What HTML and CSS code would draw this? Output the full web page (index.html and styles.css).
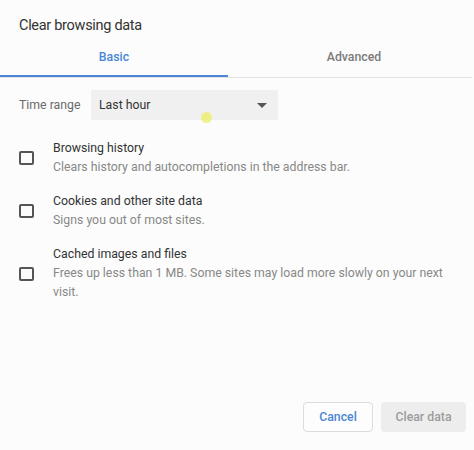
FILE: index.html
```html
<!DOCTYPE html>
<html>
<head>
<meta charset="utf-8">
<link rel="stylesheet" href="styles.css">
</head>
<body>
<div class="dialog">
  <div class="title">Clear browsing data</div>
  <div class="tabs">
    <div class="tab active">Basic</div>
    <div class="tab">Advanced</div>
  </div>
  <div class="range">
    <span class="range-label">Time range</span>
    <div class="select">
      <span>Last hour</span>
      <svg class="arrow" width="10" height="5" viewBox="0 0 10 5"><path d="M0 0 L10 0 L5 5 Z" fill="#555"/></svg>
    </div>
  </div>
  <div class="options">
    <div class="option">
      <span class="box"></span>
      <div class="text">
        <div class="label">Browsing history</div>
        <div class="desc">Clears history and autocompletions in the address bar.</div>
      </div>
    </div>
    <div class="option">
      <span class="box"></span>
      <div class="text">
        <div class="label">Cookies and other site data</div>
        <div class="desc">Signs you out of most sites.</div>
      </div>
    </div>
    <div class="option">
      <span class="box"></span>
      <div class="text">
        <div class="label">Cached images and files</div>
        <div class="desc">Frees up less than 1 MB. Some sites may load more slowly on your next visit.</div>
      </div>
    </div>
  </div>
  <div class="actions">
    <button class="btn cancel">Cancel</button>
    <button class="btn clear">Clear data</button>
  </div>
  <span class="cursor"></span>
</div>
</body>
</html>
```

FILE: styles.css
```css
html, body {
  margin: 0;
  padding: 0;
  background: #fbfcfb;
}
.dialog {
  position: relative;
  width: 474px;
  height: 450px;
  display: flex;
  flex-direction: column;
  font-family: Roboto, "Liberation Sans", sans-serif;
  color: #333;
  box-sizing: border-box;
}
.title {
  padding: 16px 0 0 19px;
  font-size: 14.5px;
  letter-spacing: -0.3px;
  line-height: 20px;
  color: #333;
}
.tabs {
  display: flex;
  margin-top: 3px;
  width: 472px;
  border-bottom: 1px solid #e4e4e4;
}
.tab {
  box-sizing: border-box;
  height: 38px;
  padding-top: 8px;
  font-size: 12.3px;
  line-height: 20px;
  font-weight: 500;
  color: #7a7a7a;
  text-align: center;
}
.tab:first-child {
  width: 228px;
}
.tab:last-child {
  flex: 1;
  padding-left: 8px;
}
.tab.active {
  color: #4a86d6;
  border-bottom: 2px solid #4a86d6;
  margin-bottom: -1px;
}
.range {
  display: flex;
  align-items: center;
  margin-top: 12px;
  padding-left: 19px;
}
.range-label {
  width: 72px;
  font-size: 12.3px;
  color: #6a6a6a;
}
.select {
  box-sizing: border-box;
  width: 187px;
  height: 30px;
  background: #f0f0f0;
  display: flex;
  align-items: center;
  justify-content: space-between;
  padding: 0 8px 0 8px;
  font-size: 12.3px;
  color: #333;
}
.arrow {
  margin-right: 3px;
}
.options {
  display: flex;
  flex-direction: column;
  gap: 15px;
  margin-top: 19px;
}
.option {
  display: flex;
  align-items: center;
}
.box {
  box-sizing: border-box;
  width: 15px;
  height: 14px;
  border: 2px solid #555;
  border-radius: 2px;
  margin: 0 19px 0 19px;
  flex: none;
}
.text {
  width: 400px;
  font-size: 12.3px;
  line-height: 19px;
}
.label {
  color: #333;
}
.desc {
  color: #888;
}
.actions {
  margin-top: auto;
  display: flex;
  justify-content: flex-end;
  gap: 8px;
  padding: 0 8px 18px 0;
}
.btn {
  box-sizing: border-box;
  height: 30px;
  font-family: Roboto, "Liberation Sans", sans-serif;
  font-size: 12.3px;
  font-weight: 500;
  border-radius: 4px;
  padding: 0;
}
.cancel {
  width: 70px;
  background: #fdfdfd;
  border: 1px solid #dcdcdc;
  color: #4a86d6;
}
.clear {
  width: 85px;
  background: #ededed;
  border: none;
  color: #9b9b9b;
}
.cursor {
  position: absolute;
  left: 201px;
  top: 112px;
  width: 11px;
  height: 11px;
  border-radius: 50%;
  background: rgba(238, 238, 100, 0.75);
}
```
